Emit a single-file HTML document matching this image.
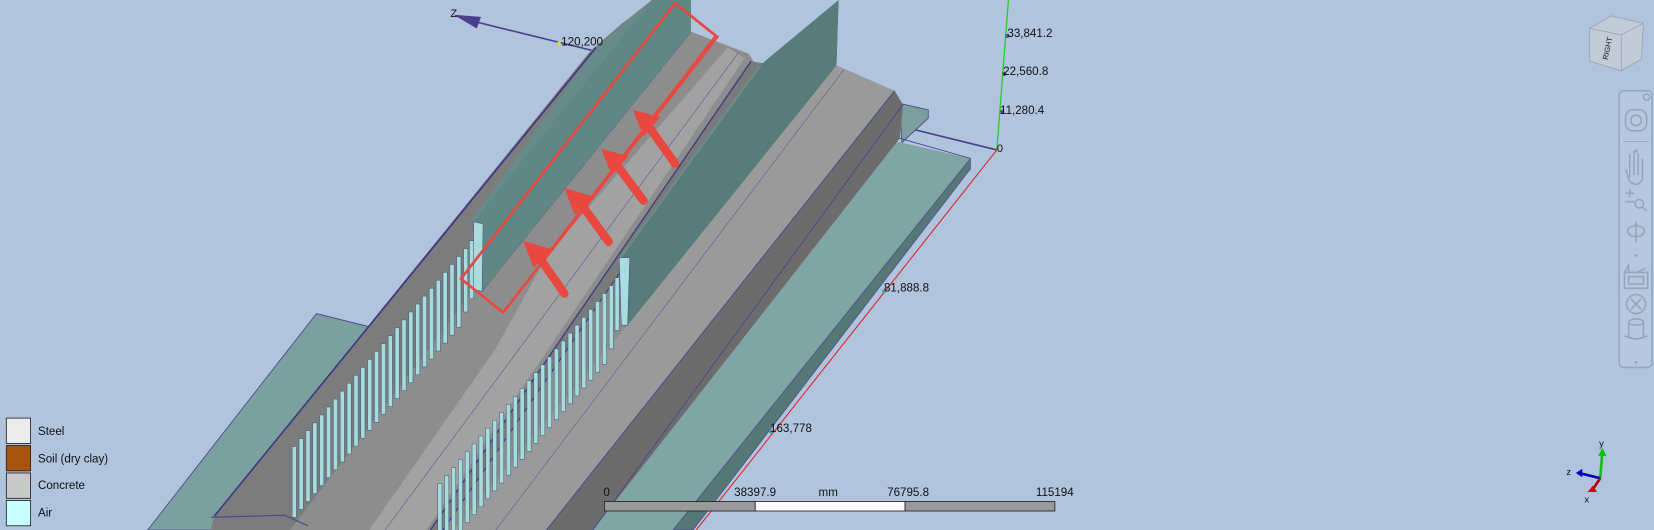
<!DOCTYPE html>
<html><head><meta charset="utf-8"><style>
html,body{margin:0;padding:0;background:#b0c4de;overflow:hidden}
svg{display:block}
text{font-family:"Liberation Sans Narrow","Liberation Sans",sans-serif;fill:#111}
</style></head><body>
<svg width="1654" height="530" viewBox="0 0 1568 502" preserveAspectRatio="none" xmlns="http://www.w3.org/2000/svg">
<rect width="1568" height="502" fill="#b0c4de"/>
<!-- z axis (behind) -->
<line x1="440" y1="18" x2="945" y2="142" stroke="#4a3f8f" stroke-width="1.5"/>
<polygon points="430,14 456,16 452,27" fill="#4a3f8f"/>
<!-- slabs -->
<polygon points="300,297 352,310 200,502 140,502" fill="#7ba19f" stroke="#4a4290" stroke-width="0.8"/>
<polygon points="853,98 880,104 880,112 855,135" fill="#7a9f9d" stroke="#4a4290" stroke-width="0.8"/>
<polygon points="845,133 920,150 638,502 555,502" fill="#7fa6a4"/>
<polygon points="920,150 920,160 657,502 638,502" fill="#557876" stroke="#4a4290" stroke-width="0.6"/>
<!-- concrete base -->
<polygon points="203,489 560,48 590,22 618,0 655,0 655,30 710,51 718,64 738,56 795,0 793,62 848,86 856,99 853,131 562,502 200,502" fill="#8d8d8d"/>
<!-- left exterior face -->
<polygon points="200,502 203,489 560,48 590,22 605,14 449,212 445,280 275,502" fill="#7c7c7c"/>
<polygon points="565,45 618,0 634,0 449,212 444,212" fill="#678b88"/>
<line x1="203" y1="489" x2="565" y2="45" stroke="#3d3585" stroke-width="1.5"/>
<polyline points="200,490 270,488 292,498" fill="none" stroke="#4a4290" stroke-width="1"/>
<!-- left channel lighter stripe -->
<polygon points="520,240 690,45 706,55 404,502 350,502 470,330" fill="#a2a2a2"/>
<line x1="457" y1="276" x2="655" y2="30" stroke="#5a5296" stroke-width="0.6"/>
<line x1="365" y1="502" x2="700" y2="50" stroke="#5a5296" stroke-width="0.5"/>
<!-- left wall -->
<polygon points="449,210 618,0 655,0 655,30 457,276" fill="#5f8784"/>
<polygon points="449,210 458,212 457,276 449,274" fill="#a9dddd" stroke="#4a4290" stroke-width="0.5"/>
<!-- divider -->
<polygon points="712,58 724,60 420,502 408,502" fill="#7a7a7a"/>
<line x1="712" y1="58" x2="408" y2="502" stroke="#3d3585" stroke-width="1.2"/>
<line x1="724" y1="60" x2="420" y2="502" stroke="#3d3585" stroke-width="1"/>
<!-- right channel -->
<polygon points="595,308 793,62 848,86 518,502 430,502" fill="#9a9a9a"/>
<line x1="470" y1="502" x2="800" y2="66" stroke="#5a5296" stroke-width="0.5"/>
<polygon points="718,64 738,56 597,244 587,244" fill="#6b8e8b"/>
<polygon points="590,243 725,58 795,0 793,62 595,308" fill="#587c79"/>
<polygon points="587,244 597,244 595,308 589,308" fill="#a9dddd" stroke="#4a4290" stroke-width="0.5"/>
<!-- right block exterior -->
<polygon points="848,86 856,99 853,131 562,502 518,502" fill="#6c6c6c"/>
<line x1="848" y1="86" x2="518" y2="502" stroke="#4a4290" stroke-width="0.8"/>
<line x1="856" y1="99" x2="562" y2="502" stroke="#4a4290" stroke-width="0.8"/>
<polyline points="853,131 920,150" stroke="#4a4290" stroke-width="0.8" fill="none"/>
<!-- piles -->
<g fill="#a8dcdc" stroke="#3f5f7a" stroke-width="0.5">
<rect x="277" y="423" width="4" height="67"/><rect x="283.5" y="415.5" width="4" height="67"/><rect x="290" y="408" width="4" height="67"/><rect x="296.5" y="400.5" width="4" height="67"/><rect x="303" y="393" width="4" height="67"/><rect x="309.5" y="385.5" width="4" height="67"/><rect x="316" y="378" width="4" height="67"/><rect x="322.5" y="370.5" width="4" height="67"/><rect x="329" y="363" width="4" height="67"/><rect x="335.5" y="355.5" width="4" height="67"/><rect x="342" y="348" width="4" height="67"/><rect x="348.5" y="340.5" width="4" height="67"/><rect x="355" y="333" width="4" height="67"/><rect x="361.5" y="325.5" width="4" height="67"/><rect x="368" y="318" width="4" height="67"/><rect x="374.5" y="310.5" width="4" height="67"/><rect x="381" y="303" width="4" height="67"/><rect x="387.5" y="295.5" width="4" height="67"/><rect x="394" y="288" width="4" height="67"/><rect x="400.5" y="280.5" width="4" height="67"/><rect x="407" y="273" width="4" height="67"/><rect x="413.5" y="265.5" width="4" height="67"/><rect x="420" y="258" width="4" height="67"/><rect x="426.5" y="250.5" width="4" height="67"/><rect x="433" y="243" width="4" height="67"/><rect x="439.5" y="235.5" width="4" height="60"/><rect x="445" y="228" width="4" height="55"/>
<rect x="415" y="458" width="4" height="67"/><rect x="421.5" y="450.5" width="4" height="67"/><rect x="428" y="443" width="4" height="67"/><rect x="434.5" y="435.5" width="4" height="67"/><rect x="441" y="428" width="4" height="67"/><rect x="447.5" y="420.5" width="4" height="67"/><rect x="454" y="413" width="4" height="67"/><rect x="460.5" y="405.5" width="4" height="67"/><rect x="467" y="398" width="4" height="67"/><rect x="473.5" y="390.5" width="4" height="67"/><rect x="480" y="383" width="4" height="67"/><rect x="486.5" y="375.5" width="4" height="67"/><rect x="493" y="368" width="4" height="67"/><rect x="499.5" y="360.5" width="4" height="67"/><rect x="506" y="353" width="4" height="67"/><rect x="512.5" y="345.5" width="4" height="67"/><rect x="519" y="338" width="4" height="67"/><rect x="525.5" y="330.5" width="4" height="67"/><rect x="532" y="323" width="4" height="67"/><rect x="538.5" y="315.5" width="4" height="67"/><rect x="545" y="308" width="4" height="67"/><rect x="551.5" y="300.5" width="4" height="67"/><rect x="558" y="293" width="4" height="67"/><rect x="564.5" y="285.5" width="4" height="67"/><rect x="571" y="278" width="4" height="67"/><rect x="577.5" y="270.5" width="4" height="60"/><rect x="583" y="263" width="4" height="50"/>
</g>
<!-- red annotation -->
<polygon points="437,264 640,3 680,35 477,296" fill="none" stroke="#e8483f" stroke-width="2.5"/>
<line x1="520" y1="239" x2="678" y2="34" stroke="#e8483f" stroke-width="1.5"/>
<g stroke="#e8483f" stroke-width="8" stroke-linecap="round">
<line x1="535" y1="278" x2="510" y2="242"/><line x1="577" y1="229" x2="550" y2="192"/><line x1="610" y1="190" x2="583" y2="154"/><line x1="640" y1="155" x2="613" y2="117"/>
</g>
<g fill="#e8483f">
<polygon points="496,228 523,236 506,254"/><polygon points="535,178 562,186 545,204"/><polygon points="570,141 596,148 580,166"/><polygon points="600,104 626,111 610,129"/>
</g>
<!-- axes labels -->
<text x="427" y="16" font-size="10.5">Z</text>
<circle cx="530" cy="41" r="1.8" fill="#e0e000"/>
<text x="532" y="43" font-size="11">120,200</text>
<line x1="945" y1="142" x2="956" y2="0" stroke="#22cc22" stroke-width="1.2"/>
<g fill="#5a4aa0"><circle cx="955" cy="34" r="2"/><circle cx="952" cy="70" r="2"/><circle cx="950" cy="106" r="2"/></g>
<text x="955" y="35" font-size="11">33,841.2</text>
<text x="951" y="71" font-size="11">22,560.8</text>
<text x="948" y="108" font-size="11">11,280.4</text>
<text x="945" y="144" font-size="10.5">0</text>
<line x1="945" y1="142" x2="660" y2="502" stroke="#e02020" stroke-width="1"/>
<circle cx="838" cy="276" r="1.8" fill="#33aaaa"/><text x="838" y="276" font-size="11">81,888.8</text>
<circle cx="731" cy="409" r="1.8" fill="#33aaaa"/><text x="730" y="409" font-size="11">163,778</text>
<!-- legend -->
<g stroke="#222" stroke-width="0.8">
<rect x="6" y="396" width="23" height="24" fill="#ececec"/>
<rect x="6" y="422" width="23" height="24" fill="#a8540e"/>
<rect x="6" y="448" width="23" height="24" fill="#c8c8c8"/>
<rect x="6" y="474" width="23" height="24" fill="#c8ffff"/>
</g>
<text x="36" y="412" font-size="11">Steel</text>
<text x="36" y="438" font-size="11">Soil (dry clay)</text>
<text x="36" y="463" font-size="11">Concrete</text>
<text x="36" y="489" font-size="11">Air</text>
<!-- scale bar -->
<rect x="573" y="475" width="143" height="9" fill="#9a9a9a" stroke="#222" stroke-width="0.8"/>
<rect x="716" y="475" width="142" height="9" fill="#fff" stroke="#222" stroke-width="0.8"/>
<rect x="858" y="475" width="142" height="9" fill="#9a9a9a" stroke="#222" stroke-width="0.8"/>
<text x="572" y="470" font-size="11">0</text>
<text x="696" y="470" font-size="11">38397.9</text>
<text x="776" y="470" font-size="11">mm</text>
<text x="841" y="470" font-size="11">76795.8</text>
<text x="982" y="470" font-size="11">115194</text>
<!-- nav cube -->
<polygon points="1507,27 1527,15 1558,22 1556,56 1537,67 1507,58" fill="#c2cbd6" stroke="#98a4b4" stroke-width="0.8"/>
<polyline points="1507,27 1537,33 1558,22" fill="none" stroke="#98a4b4" stroke-width="0.8"/>
<line x1="1537" y1="33" x2="1537" y2="67" stroke="#98a4b4" stroke-width="0.8"/>
<text x="0" y="0" font-size="7" fill="#6a7585" transform="translate(1524,57) rotate(-78)">RIGHT</text>
<!-- toolbar -->
<rect x="1535" y="86" width="31" height="262" rx="4" fill="#b6c7df" stroke="#95a8c2" stroke-width="1.5"/>
<g fill="none" stroke="#94a3b8" stroke-width="1.4">
<circle cx="1561" cy="92" r="3"/>
<rect x="1541" y="104" width="20" height="20" rx="7"/><circle cx="1551" cy="114" r="5"/>
<line x1="1539" y1="134" x2="1563" y2="134" stroke-width="0.8"/>
<path d="M1545,172 L1541,160 M1545,168 L1545,146 M1549,166 L1549,143 M1553,166 L1553,145 M1557,168 L1557,150 M1545,172 Q1552,178 1557,170 L1557,160"/>
<path d="M1541,183 h8 M1545,179 v8 M1541,191 h8"/><circle cx="1554" cy="193" r="4"/><line x1="1557" y1="196" x2="1561" y2="200"/>
<ellipse cx="1551" cy="219" rx="8" ry="5"/><line x1="1551" y1="210" x2="1551" y2="230"/>
<rect x="1540" y="258" width="22" height="15"/><rect x="1544" y="262" width="14" height="7"/><path d="M1540,258 l4,-7 v7 M1552,258 l8,-4"/>
<circle cx="1551" cy="288" r="9"/><path d="M1546,283 l10,10 M1556,283 l-10,10"/>
<path d="M1544,305 v14 q7,4 14,0 v-14"/><ellipse cx="1551" cy="305" rx="7" ry="3"/><path d="M1540,318 q11,6 22,0"/>
</g>
<g fill="#94a3b8"><polygon points="1549,142 1553,142 1551,145"/><polygon points="1549,212 1553,212 1551,215"/><polygon points="1549,241 1553,241 1551,244"/><polygon points="1549,342 1553,342 1551,345"/></g>
<!-- triad -->
<line x1="1517" y1="453" x2="1519" y2="428" stroke="#10c010" stroke-width="2.5"/>
<polygon points="1515,432 1523,432 1519,424" fill="#10c010"/>
<line x1="1517" y1="453" x2="1497" y2="448" stroke="#0000c0" stroke-width="2.5"/>
<polygon points="1494,448 1500,444 1500,452" fill="#0000c0"/>
<line x1="1517" y1="453" x2="1509" y2="465" stroke="#b00000" stroke-width="2.5"/>
<polygon points="1505,466 1510,460 1514,466" fill="#d00000"/>
<text x="1516" y="423" font-size="9">y</text>
<text x="1485" y="450" font-size="9">z</text>
<text x="1502" y="476" font-size="9">x</text>
</svg>
</body></html>
